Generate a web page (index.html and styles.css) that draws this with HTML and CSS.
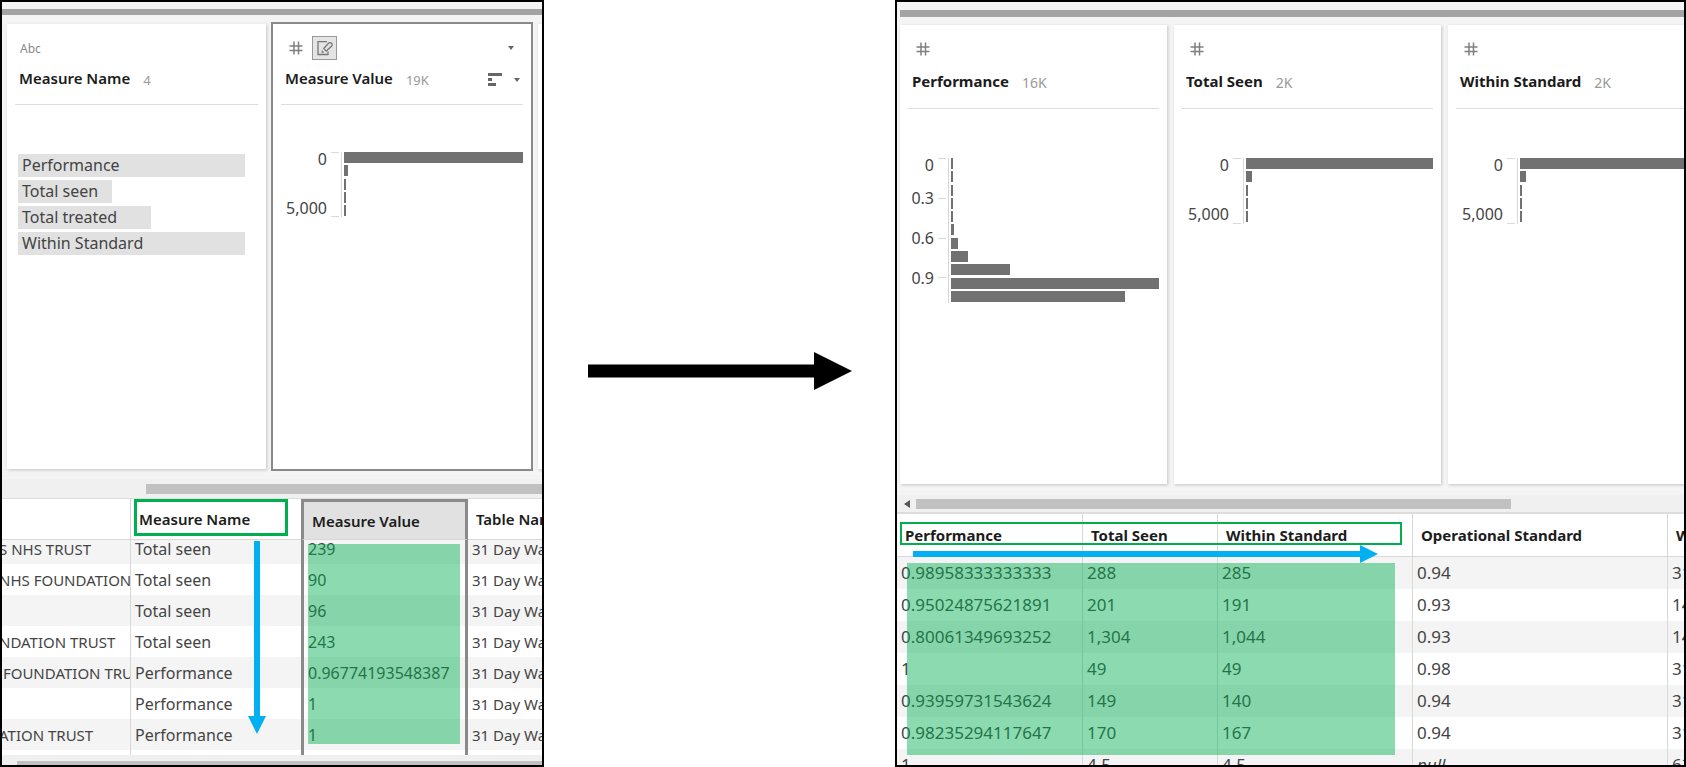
FILE: index.html
```html
<!DOCTYPE html>
<html lang="en">
<head>
    <meta charset="UTF-8">
    <meta name="viewport" content="width=device-width, initial-scale=1.0">
    <title>Pivot Rows to Columns</title>
    <link rel="stylesheet" href="styles.css">
</head>
<body>
    <svg class="symbols" width="0" height="0" aria-hidden="true">
        <symbol id="hash" viewBox="0 0 14 14">
            <path d="M5 0.5v13M9.5 0.5v13M0.5 5h13M0.5 9.5h13" fill="none" stroke="#808080" stroke-width="1.5"/>
        </symbol>
    </svg>

    <main class="comparison">
        <!-- Before: measures stored in rows -->
        <section class="panel panel-before">
            <div class="top-bar"></div>
            <div class="cards">
                <article class="card">
                    <div class="card-type">Abc</div>
                    <div class="card-title">
                        <h2>Measure Name</h2>
                        <span class="count">4</span>
                    </div>
                    <ul class="values">
                        <li style="width: 227px">Performance</li>
                        <li style="width: 94px">Total seen</li>
                        <li style="width: 133px">Total treated</li>
                        <li style="width: 227px">Within Standard</li>
                    </ul>
                </article>

                <article class="card selected">
                    <div class="card-type">
                        <svg class="hash" width="14" height="14"><use href="#hash"/></svg>
                        <button type="button" class="edit-btn" aria-label="Edit">
                            <svg width="17" height="17" viewBox="0 0 17 17" fill="none" stroke="#777" stroke-width="1.300">
                                <path d="M11 1.700H2v12.800h10v-3"/>
                                <path d="M7.800 8.500l4.700-5.200q1.500-1.500 3 0t0 2.900l-5.300 4.900z"/>
                                <path d="M6.200 10.500v1.600h1.600"/>
                            </svg>
                        </button>
                        <button type="button" class="caret card-menu" aria-label="Field menu"></button>
                    </div>
                    <div class="card-title">
                        <h2>Measure Value</h2>
                        <span class="count">19K</span>
                        <button type="button" class="sort-btn" aria-label="Sort">
                            <svg width="14" height="13" viewBox="0 0 14 13" fill="#666">
                                <rect x="0" y="0" width="14" height="3"/>
                                <rect x="0" y="5" width="4" height="3"/>
                                <rect x="0" y="10" width="8" height="3"/>
                            </svg>
                        </button>
                        <button type="button" class="caret" aria-label="Sort options"></button>
                    </div>
                    <div class="histogram">
                        <div class="labels wide"><span>0</span><span>5,000</span></div>
                        <svg class="axis" width="12" height="65"><path d="M0 .5h8M0 64.500h8M10.500 0v65"/></svg>
                        <div class="bars short">
                            <i style="width: 100%"></i>
                            <i style="width: 4px"></i>
                            <i style="width: 2px"></i>
                            <i style="width: 2px"></i>
                            <i style="width: 2px"></i>
                        </div>
                    </div>
                </article>

                <article class="card"></article>
            </div>

            <div class="scrollbar"><span class="thumb"></span></div>

            <div class="grid">
                <table>
                    <colgroup>
                        <col class="col-org">
                        <col class="col-name">
                        <col class="col-value">
                        <col>
                    </colgroup>
                    <thead>
                        <tr>
                            <th></th>
                            <th>Measure Name</th>
                            <th class="picked">Measure Value</th>
                            <th>Table Names</th>
                        </tr>
                    </thead>
                    <tbody>
                        <tr class="scrolled">
                            <td>S NHS TRUST</td><td>Total seen</td><td class="picked">239</td><td>31 Day Wait</td>
                        </tr>
                        <tr><td>NHS FOUNDATION TRUST</td><td>Total seen</td><td class="picked">90</td><td>31 Day Wait</td></tr>
                        <tr><td></td><td>Total seen</td><td class="picked">96</td><td>31 Day Wait</td></tr>
                        <tr><td>NDATION TRUST</td><td>Total seen</td><td class="picked">243</td><td>31 Day Wait</td></tr>
                        <tr><td>&nbsp;FOUNDATION TRUST</td><td>Performance</td><td class="picked">0.96774193548387</td><td>31 Day Wait</td></tr>
                        <tr><td></td><td>Performance</td><td class="picked">1</td><td>31 Day Wait</td></tr>
                        <tr><td>ATION TRUST</td><td>Performance</td><td class="picked">1</td><td>31 Day Wait</td></tr>
                        <tr><td></td><td></td><td class="picked"></td><td></td></tr>
                    </tbody>
                </table>
                <div class="note-box"></div>
                <div class="note-fill"></div>
                <svg class="note-arrow" width="18" height="193" viewBox="0 0 18 193">
                    <path d="M6 0h6v175h6l-9 18-9-18h6z"/>
                </svg>
            </div>
            <div class="scrollbar bottom"><span class="thumb"></span></div>
        </section>

        <div class="arrow">
            <svg width="264" height="38" viewBox="0 0 264 38">
                <path d="M0 12.500h226V0l38 19-38 19V25.500H0z"/>
            </svg>
        </div>

        <!-- After: one column for each measure -->
        <section class="panel panel-after">
            <div class="top-bar"></div>
            <div class="cards">
                <article class="card">
                    <div class="card-type"><svg class="hash" width="14" height="14"><use href="#hash"/></svg></div>
                    <div class="card-title">
                        <h2>Performance</h2>
                        <span class="count">16K</span>
                    </div>
                    <div class="histogram">
                        <div class="labels"><span>0</span><span>0.3</span><span>0.6</span><span>0.9</span></div>
                        <svg class="axis" width="12" height="145"><path d="M0 .5h8M0 40.500h8M0 80.500h8M0 119.500h8M10.500 0v145"/></svg>
                        <div class="bars">
                            <i style="width: 2px"></i>
                            <i style="width: 2px"></i>
                            <i style="width: 2px"></i>
                            <i style="width: 2px"></i>
                            <i style="width: 2px"></i>
                            <i style="width: 3px"></i>
                            <i style="width: 7px"></i>
                            <i style="width: 17px"></i>
                            <i style="width: 59px"></i>
                            <i style="width: 100%"></i>
                            <i style="width: 174px"></i>
                        </div>
                    </div>
                </article>

                <article class="card">
                    <div class="card-type"><svg class="hash" width="14" height="14"><use href="#hash"/></svg></div>
                    <div class="card-title">
                        <h2>Total Seen</h2>
                        <span class="count">2K</span>
                    </div>
                    <div class="histogram">
                        <div class="labels wide"><span>0</span><span>5,000</span></div>
                        <svg class="axis" width="12" height="66"><path d="M0 .5h8M0 65.500h8M10.500 0v66"/></svg>
                        <div class="bars short">
                            <i style="width: 100%"></i>
                            <i style="width: 6px"></i>
                            <i style="width: 2px"></i>
                            <i style="width: 2px"></i>
                            <i style="width: 2px"></i>
                        </div>
                    </div>
                </article>

                <article class="card">
                    <div class="card-type"><svg class="hash" width="14" height="14"><use href="#hash"/></svg></div>
                    <div class="card-title">
                        <h2>Within Standard</h2>
                        <span class="count">2K</span>
                    </div>
                    <div class="histogram">
                        <div class="labels wide"><span>0</span><span>5,000</span></div>
                        <svg class="axis" width="12" height="66"><path d="M0 .5h8M0 65.500h8M10.500 0v66"/></svg>
                        <div class="bars short">
                            <i style="width: 100%"></i>
                            <i style="width: 6px"></i>
                            <i style="width: 2px"></i>
                            <i style="width: 2px"></i>
                            <i style="width: 2px"></i>
                        </div>
                    </div>
                </article>
            </div>

            <div class="scrollbar">
                <svg width="6" height="8" viewBox="0 0 6 8"><path d="M6 0v8L0 4z" fill="#555"/></svg>
                <span class="thumb"></span>
            </div>

            <div class="grid">
                <table>
                    <colgroup>
                        <col class="col-performance">
                        <col class="col-seen">
                        <col class="col-within">
                        <col class="col-operational">
                        <col>
                    </colgroup>
                    <thead>
                        <tr>
                            <th>Performance</th>
                            <th>Total Seen</th>
                            <th>Within Standard</th>
                            <th>Operational Standard</th>
                            <th>W</th>
                        </tr>
                    </thead>
                    <tbody>
                        <tr><td>0.98958333333333</td><td>288</td><td>285</td><td>0.94</td><td>31</td></tr>
                        <tr><td>0.95024875621891</td><td>201</td><td>191</td><td>0.93</td><td>14</td></tr>
                        <tr><td>0.80061349693252</td><td>1,304</td><td>1,044</td><td>0.93</td><td>14</td></tr>
                        <tr><td>1</td><td>49</td><td>49</td><td>0.98</td><td>31</td></tr>
                        <tr><td>0.93959731543624</td><td>149</td><td>140</td><td>0.94</td><td>31</td></tr>
                        <tr><td>0.98235294117647</td><td>170</td><td>167</td><td>0.94</td><td>31</td></tr>
                        <tr><td>1</td><td>4.5</td><td>4.5</td><td><em>null</em></td><td>62</td></tr>
                    </tbody>
                </table>
                <div class="note-box"></div>
                <div class="note-fill"></div>
                <svg class="note-arrow" width="465" height="18" viewBox="0 0 465 18">
                    <path d="M0 6h447V0l18 9-18 9v-6H0z"/>
                </svg>
            </div>
        </section>
    </main>
</body>
</html>
```
FILE: styles.css
```css
* {
    box-sizing: border-box;
}

body {
    margin: 0;
    background-color: #fff;
    color: #444;
    font-family: "Noto Sans", "Open Sans", sans-serif;
    font-size: 16px;
}

button {
    padding: 0;
    border: none;
    background: none;
    cursor: pointer;
}

.symbols {
    position: absolute;
}

.comparison {
    display: grid;
    grid-template-columns: minmax(0, 544fr) minmax(0, 351fr) minmax(0, 791fr);
    height: 100vh;
    overflow: hidden;
}

.panel {
    display: flex;
    flex-direction: column;
    min-height: 0;
    border: 2px solid #000;
    background-color: #f4f4f4;
    overflow: hidden;
}

.arrow {
    display: flex;
    align-items: center;
    justify-content: center;
    padding-bottom: 26px;
}

.top-bar {
    flex: none;
    height: 6px;
    margin-top: 7px;
    background-color: #a3a3a3;
}

/* Profile cards */
.cards {
    display: flex;
    flex: none;
    gap: 7px;
    padding: 9px 0 10px 5px;
}

.card {
    flex: 0 0 259px;
    min-height: 445px;
    padding-top: 12px;
    background-color: #fff;
    box-shadow: 1px 1px 3px rgba(0, 0, 0, 0.2);
}

.card.selected {
    flex-basis: 258px;
    outline: 2px solid #8a8a8a;
    box-shadow: none;
}

.card-type {
    display: flex;
    align-items: center;
    height: 24px;
    padding: 0 12px 0 13px;
    color: #888;
    font-size: 12px;
}

.hash {
    margin: 0 9px 0 3px;
}

.edit-btn {
    display: flex;
    align-items: center;
    justify-content: center;
    width: 25px;
    height: 24px;
    border: 1px solid #999;
    background-color: #e4e4e4;
}

.caret {
    width: 0;
    height: 0;
    border: 3px solid transparent;
    border-top: 4px solid #666;
    border-bottom: none;
}

.card-menu {
    margin-left: auto;
    margin-right: 5px;
}

.card-title {
    display: flex;
    align-items: center;
    height: 37px;
    margin: 8px 8px 0;
    padding: 0 3px 13px 4px;
    border-bottom: 1px solid #ddd;
}

.card-title h2 {
    margin: 0;
    padding-bottom: 3px;
    color: #1c1c1c;
    font-size: 15px;
    font-weight: 600;
    line-height: 22px;
}

.count {
    margin-left: 13px;
    color: #999;
    font-size: 13px;
    line-height: 22px;
}

.sort-btn {
    display: flex;
    margin-left: auto;
    margin-right: 12px;
}

.card-title .caret {
    flex: none;
}

.values {
    margin: 49px 0 0;
    padding: 0 11px;
    list-style: none;
}

.values li {
    height: 23px;
    margin-bottom: 3px;
    padding-left: 4px;
    background-color: #e1e1e1;
    line-height: 23px;
    white-space: nowrap;
}

/* Histograms */
.histogram {
    display: flex;
    align-items: flex-start;
    margin-top: 47px;
    padding: 0 8px 0 5px;
}

.labels {
    display: flex;
    flex: none;
    flex-direction: column;
    width: 29px;
    margin-top: -3px;
    margin-right: 4px;
    line-height: 20px;
    text-align: right;
}

.labels.wide {
    width: 49px;
}

.labels span {
    height: 40px;
}

.labels span:first-child {
    height: 33px;
}

.labels.wide span:first-child {
    height: 49px;
}

.axis {
    flex: none;
    fill: none;
    stroke: #d8d8d8;
}

.bars {
    display: flex;
    flex: 1;
    flex-direction: column;
    justify-content: space-between;
    height: 144px;
    margin-left: 1px;
}

.bars.short {
    height: 64px;
}

.bars i {
    height: 11px;
    background-color: #717171;
}

/* Scrollbars */
.scrollbar {
    display: flex;
    flex: none;
    align-items: center;
    height: 20px;
    background-color: #f0f0f0;
    border-bottom: 1px solid #ddd;
}

.thumb {
    height: 10px;
    background-color: #c1c1c1;
}

.panel-before .thumb {
    flex: 1;
    margin-left: 144px;
}

.scrollbar.bottom {
    height: 10px;
    align-items: flex-end;
    border-bottom: none;
}

.scrollbar.bottom .thumb {
    height: 4px;
    margin-left: 15px;
}

/* Data grid */
.grid {
    position: relative;
    flex: 1;
    min-height: 0;
    background-color: #fff;
    overflow: hidden;
}

table {
    width: 100%;
    table-layout: fixed;
    border-collapse: separate;
    border-spacing: 0;
}

th,
td {
    padding: 0 0 0 4px;
    border-right: 1px solid #d8d8d8;
    line-height: 24px;
    text-align: left;
    white-space: nowrap;
    overflow: hidden;
}

th {
    height: 41px;
    padding-left: 8px;
    border-bottom: 1px solid #d8d8d8;
    color: #1c1c1c;
    font-size: 15px;
    font-weight: 600;
}

td {
    height: 31px;
}

tbody tr:nth-child(odd) {
    background-color: #f4f4f4;
}

th:last-child,
td:last-child {
    border-right: none;
}

.panel-before td:first-child {
    padding-left: 0;
    font-size: 15px;
    text-indent: -3px;
}

.panel-before td:last-child {
    font-size: 15px;
}

.panel-before th:nth-child(2),
.panel-before td:nth-child(2) {
    border-right: none;
}

.scrolled td {
    height: 24px;
    padding-bottom: 6px;
    line-height: 18px;
}

th.picked,
td.picked {
    border-left: 3px solid #8a8a8a;
    border-right: 3px solid #8a8a8a;
}

th.picked {
    border-top: 3px solid #8a8a8a;
    background-color: #e1e1e1;
}

.col-org {
    width: 129px;
}

.col-name {
    width: 170px;
}

.col-value {
    width: 167px;
}

.col-performance {
    width: 186px;
}

.col-seen {
    width: 135px;
}

.col-within {
    width: 195px;
}

.col-operational {
    width: 255px;
}

/* Annotations drawn over the grid */
.note-box,
.note-fill,
.note-arrow {
    position: absolute;
}

.note-box {
    border: 3px solid #00b050;
}

.note-fill {
    background-color: rgba(0, 176, 80, 0.45);
}

.note-arrow {
    fill: #00b0f0;
}

.panel-before .note-box {
    top: 0;
    left: 132px;
    width: 154px;
    height: 37px;
}

.panel-before .note-fill {
    top: 45px;
    left: 306px;
    width: 152px;
    height: 200px;
}

.panel-before .note-arrow {
    top: 42px;
    left: 246px;
}

/* The pivoted side is a little roomier */
.panel-after .top-bar {
    height: 7px;
    margin-top: 8px;
    margin-left: 3px;
}

.panel-after .cards {
    padding: 8px 0 11px 3px;
}

.panel-after .card {
    flex-basis: 267px;
    min-height: 459px;
}

.panel-after .card-title {
    height: 38px;
    margin-top: 10px;
}

.panel-after h2 {
    padding-bottom: 5px;
    font-weight: 700;
}

.panel-after th {
    font-weight: 700;
}

.panel-after .count {
    font-size: 14px;
}

.panel-after .histogram {
    margin-top: 49px;
}

.panel-after .labels.wide {
    width: 50px;
}

.panel-after .scrollbar {
    gap: 6px;
    height: 19px;
    padding-left: 7px;
    border-bottom-width: 2px;
}

.panel-after .thumb {
    width: 595px;
}

.panel-after th {
    height: 43px;
}

.panel-after td {
    height: 32px;
    font-size: 17px;
}

.panel-after .note-box {
    top: 8px;
    left: 3px;
    width: 502px;
    height: 23px;
    border-width: 2px;
}

.panel-after .note-fill {
    top: 49px;
    left: 10px;
    width: 488px;
    height: 192px;
}

.panel-after .note-arrow {
    top: 31px;
    left: 16px;
}
```
